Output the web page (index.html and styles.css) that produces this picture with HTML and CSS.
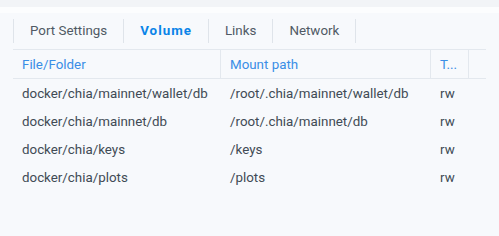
FILE: index.html
```html
<!DOCTYPE html>
<html lang="en">
<head>
    <meta charset="UTF-8">
    <title>Container Settings</title>
    <link rel="stylesheet" href="styles.css">
</head>
<body>
    <div class="top-strip"></div>
    <div class="top-gap"></div>
    <div class="panel">
        <div class="tabs">
            <div class="tab">Port Settings</div>
            <div class="tab active">Volume</div>
            <div class="tab">Links</div>
            <div class="tab">Network</div>
        </div>

        <div class="grid">
            <div class="grid-head">
                <div class="cell col-file">File/Folder</div>
                <div class="cell col-mount">Mount path</div>
                <div class="cell col-type">T...</div>
                <div class="cell col-rest"></div>
            </div>
            <div class="grid-row">
                <div class="cell col-file">docker/chia/mainnet/wallet/db</div>
                <div class="cell col-mount">/root/.chia/mainnet/wallet/db</div>
                <div class="cell col-type">rw</div>
            </div>
            <div class="grid-row">
                <div class="cell col-file">docker/chia/mainnet/db</div>
                <div class="cell col-mount">/root/.chia/mainnet/db</div>
                <div class="cell col-type">rw</div>
            </div>
            <div class="grid-row">
                <div class="cell col-file">docker/chia/keys</div>
                <div class="cell col-mount">/keys</div>
                <div class="cell col-type">rw</div>
            </div>
            <div class="grid-row">
                <div class="cell col-file">docker/chia/plots</div>
                <div class="cell col-mount">/plots</div>
                <div class="cell col-type">rw</div>
            </div>
        </div>
    </div>
</body>
</html>
```

FILE: styles.css
```css
* { margin: 0; padding: 0; box-sizing: border-box; }
body {
    font-family: Roboto, 'Noto Sans', sans-serif;
    font-size: 13.35px;
    color: #414b55;
    background: #f7f9fc;
    width: 499px;
    height: 236px;
    overflow: hidden;
}
.top-strip {
    height: 7px;
    background: #f2f4f7;
}
.top-gap {
    height: 6px;
    background: #fcfdfe;
}
.panel {
    padding: 6px 13px 0 13px;
}
.tabs {
    display: flex;
    height: 24px;
    margin-bottom: 6px;
}
.tab {
    display: flex;
    align-items: center;
    padding: 0 16px;
    border-left: 1px solid #dfe4ea;
    color: #505a64;
    line-height: 24px;
}
.tab:last-child {
    border-right: 1px solid #dfe4ea;
}
.tab.active {
    color: #0a84e8;
    font-weight: bold;
    letter-spacing: 1px;
}
.grid {
    width: 473px;
    border-top: 1px solid #e3e8ee;
}
.grid-head {
    display: flex;
    height: 29px;
    border-bottom: 1px solid #e3e8ee;
}
.grid-head .cell {
    color: #3a8ee6;
    border-right: 1px solid #e3e8ee;
}
.grid-head .col-rest {
    border-right: none;
}
.grid-row {
    display: flex;
    height: 28px;
}
.cell {
    display: flex;
    align-items: center;
    padding-left: 9px;
    white-space: nowrap;
    overflow: hidden;
}
.col-file { width: 208px; }
.col-mount { width: 210px; }
.col-type { width: 38px; }
.col-rest { flex: 1; }
```
